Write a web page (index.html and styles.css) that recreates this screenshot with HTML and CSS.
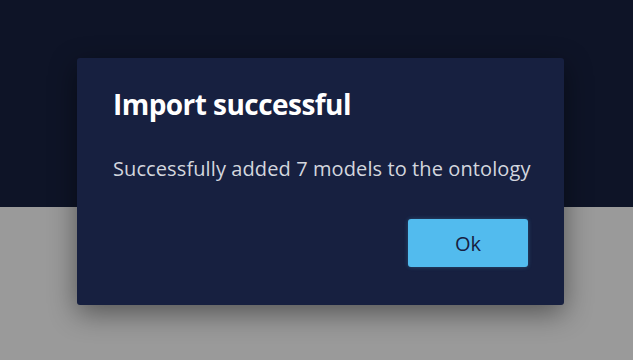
FILE: index.html
```html
<!DOCTYPE html>
<html>
<head>
<meta charset="utf-8">
<link rel="stylesheet" href="styles.css">
</head>
<body>
<div class="page">
  <div class="top"></div>
  <div class="bottom"></div>
</div>
<div class="dialog">
  <h1 class="title">Import successful</h1>
  <p class="message">Successfully added 7 models to the ontology</p>
  <div class="actions">
    <button class="ok">Ok</button>
  </div>
</div>
</body>
</html>
```
FILE: styles.css
```css
html, body {
  margin: 0;
  padding: 0;
  width: 633px;
  height: 360px;
  overflow: hidden;
  font-family: "Open Sans", "Noto Sans", sans-serif;
}
.page {
  display: flex;
  flex-direction: column;
  height: 360px;
}
.top {
  height: 207px;
  background: #0e1427;
}
.bottom {
  flex: 1;
  background: #9a9a9a;
}
.dialog {
  position: absolute;
  left: 77px;
  top: 58px;
  width: 487px;
  height: 247px;
  box-sizing: border-box;
  padding: 28px 36px 38px 36px;
  background: #172040;
  border-radius: 3px;
  box-shadow: 0 8px 28px rgba(0, 0, 0, 0.45);
  display: flex;
  flex-direction: column;
}
.title {
  margin: 0;
  font-size: 28px;
  font-weight: 700;
  color: #ffffff;
  line-height: 36px;
  letter-spacing: -0.55px;
}
.message {
  margin: 33px 0 0 0;
  font-size: 20px;
  color: #d3d6de;
  line-height: 28px;
  letter-spacing: 0.1px;
  white-space: nowrap;
}
.actions {
  margin-top: auto;
  display: flex;
  justify-content: flex-end;
}
.ok {
  width: 120px;
  height: 48px;
  border: none;
  border-radius: 3px;
  background: #52bbee;
  color: #172040;
  font-family: inherit;
  font-size: 20px;
  box-shadow: 0 0 4px rgba(82, 187, 238, 0.3);
}
```
